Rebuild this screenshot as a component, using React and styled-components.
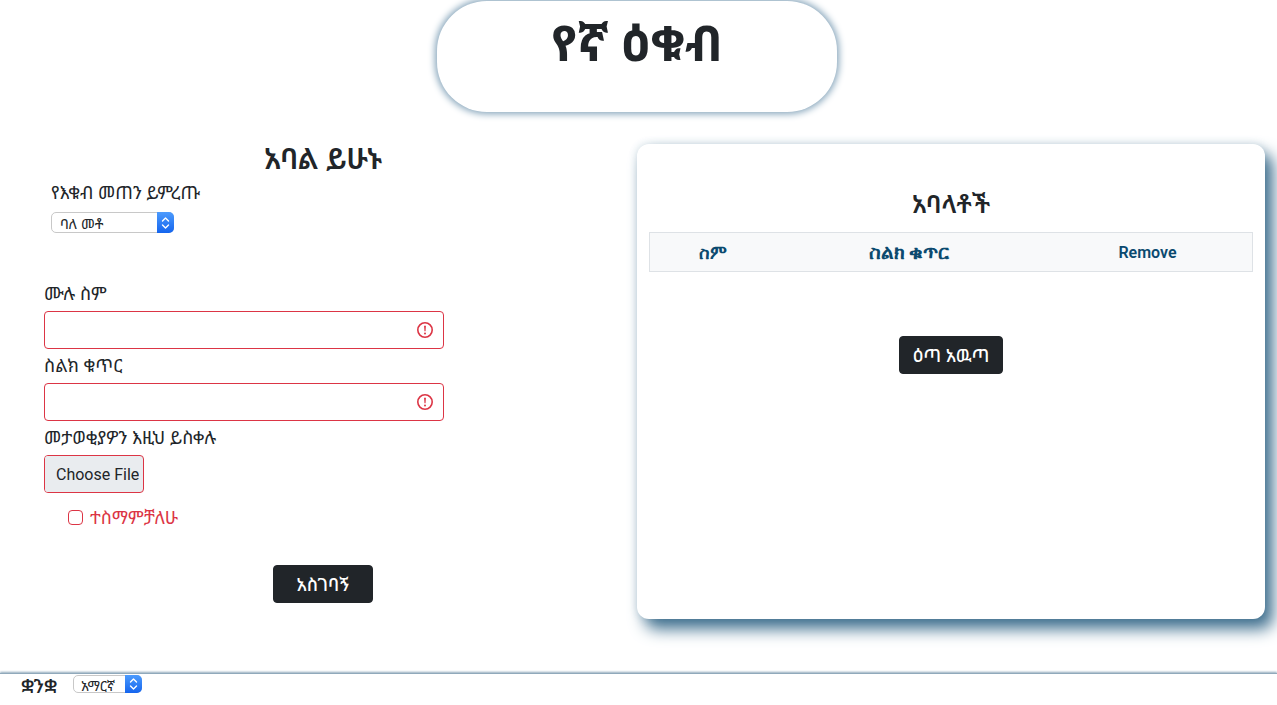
import styled, { createGlobalStyle } from 'styled-components'

const GlobalStyle = createGlobalStyle`
  * { box-sizing: border-box; }
  html, body { margin: 0; padding: 0; background: #fff; }
  body {
    font-family: "Noto Sans", "Noto Sans Ethiopic", "Liberation Sans", sans-serif;
    font-size: 18px;
    line-height: 1.5;
    color: #212529;
  }
`

const Page = styled.div`
  width: 1277px;
  height: 705px;
  overflow: hidden;
  display: flex;
  flex-direction: column;
`

const Banner = styled.header`
  align-self: center;
  width: 400px;
  height: 111px;
  margin: 1px 3px 0 0;
  border-radius: 50px;
  background: #fff;
  box-shadow: 0 0 7px 2px #85a4ba;
  text-align: center;
`

const BannerTitle = styled.h1`
  margin: 11px 0 0;
  font-size: 49.5px;
  line-height: 60px;
  font-weight: 700;
`

const Columns = styled.main`
  display: flex;
  align-items: flex-start;
  margin-top: 32px;
`

const SignUp = styled.section`
  width: 637px;
  padding: 0 0 0 44px;
`

const SignUpTitle = styled.h2`
  width: 558px;
  height: 36px;
  margin: 0;
  text-align: center;
  font-size: 29px;
  line-height: 28px;
  font-weight: 600;
`

const PotPicker = styled.div`
  padding-left: 7px;
  height: 101px;
`

const Label = styled.label`
  display: block;
  font-size: 18px;
  line-height: 24px;
`

const PickerLabel = styled(Label)`
  margin-bottom: 8px;
`

const SelectWrap = styled.div`
  position: relative;
  width: ${({ $w }) => $w}px;
  height: ${({ $h }) => $h}px;
  margin-top: ${({ $top }) => $top || 0}px;
`

const NativeSelect = styled.select`
  appearance: none;
  display: block;
  width: 100%;
  height: 100%;
  padding: 0 0 ${({ $lift }) => $lift}px ${({ $pad }) => $pad}px;
  border: 1px solid #c8c8c8;
  border-radius: 5px;
  background: #fff;
  color: #212529;
  font-family: inherit;
  font-size: ${({ $size }) => $size}px;
`

const SelectStepper = styled.span`
  position: absolute;
  top: 0;
  right: 0;
  bottom: 0;
  width: 17px;
  border-radius: 0 5px 5px 0;
  background: linear-gradient(#4c9bfd, #1565ee);
  display: flex;
  align-items: center;
  justify-content: center;
  pointer-events: none;
`

const Field = styled.div`
  position: relative;
  width: 400px;
  height: 38px;
`

const TextInput = styled.input`
  display: block;
  width: 100%;
  height: 100%;
  padding: 6px 36px 6px 12px;
  border: 1px solid #dc3545;
  border-radius: 4px;
  background: #fff;
  outline: none;
`

const FieldIcon = styled.svg`
  position: absolute;
  top: 11px;
  right: 11px;
  width: 16px;
  height: 16px;
  pointer-events: none;
`

const FieldLabel = styled(Label)`
  margin: ${({ $top }) => $top}px 0 ${({ $bottom }) => $bottom}px;
`

const FileInput = styled.input`
  display: block;
  width: 100px;
  height: 38px;
  padding: 0;
  border: 1px solid #dc3545;
  border-radius: 4px;
  background: #e9ecef;
  overflow: hidden;
  font-family: "Roboto", "Liberation Sans", sans-serif;
  font-size: 16px;
  color: #212529;

  &::file-selector-button {
    height: 36px;
    margin: 0 30px 0 0;
    padding: 0 0 0 11px;
    border: 0;
    background: #e9ecef;
    color: #212529;
    font: inherit;
  }
`

const Consent = styled.div`
  display: flex;
  align-items: center;
  gap: 7px;
  margin: 12px 0 0 24px;
  height: 24px;
  color: #dc3545;
`

const CheckBox = styled.input`
  appearance: none;
  width: 15px;
  height: 15px;
  margin: 0;
  border: 1px solid #dc3545;
  border-radius: 4px;
  background: #fff;
`

const DarkButton = styled.button`
  display: block;
  width: ${({ $w }) => $w}px;
  height: 38px;
  margin: ${({ $top }) => $top}px auto 0;
  padding: 0;
  border: 1px solid #212529;
  border-radius: 4px;
  background: #212529;
  color: #fff;
  font-family: inherit;
  font-size: 18px;
  font-weight: 500;
`

const SubmitRow = styled.div`
  width: 558px;
`

const MembersCard = styled.section`
  width: 628px;
  height: 475px;
  padding: 44px 12px 0;
  border-radius: 12px;
  background: #fff;
  box-shadow: 8px 10px 16px #3f6f8e, 0 0 8px rgba(47, 99, 133, 0.2);
`

const MembersTitle = styled.h3`
  margin: 0 0 14px;
  text-align: center;
  font-size: 25px;
  line-height: 30px;
  font-weight: 600;
`

const Table = styled.table`
  width: 604px;
  border-collapse: separate;
  border-spacing: 0;
  table-layout: fixed;
`

const HeadCell = styled.th`
  width: ${({ $w }) => $w}px;
  height: 40px;
  padding: 1px 0 0;
  border-top: 1px solid #dee2e6;
  border-bottom: 1px solid #dee2e6;
  background: #f8f9fa;
  color: #0b4a6f;
  font-family: "Roboto", "Noto Sans", sans-serif;
  font-size: ${({ $size }) => $size}px;
  font-weight: 600;
  text-align: center;

  &:first-child { border-left: 1px solid #dee2e6; }
  &:last-child { border-right: 1px solid #dee2e6; }
`

const Footer = styled.footer`
  display: flex;
  align-items: flex-start;
  height: 32px;
  margin-top: 54px;
  padding-left: 21px;
  border-top: 1px solid #90a9bb;
  box-shadow: 0 -1px 2px #90a9bb;
`

const FooterLabel = styled.span`
  width: 52px;
  font-size: 20px;
  line-height: 24px;
  font-weight: 500;
`

const Chevrons = () => (
  <svg width="9" height="14" viewBox="0 0 9 14" fill="none" stroke="#fff" strokeWidth="1.4" strokeLinecap="round" strokeLinejoin="round">
    <path d="M1.5 5 4.5 2 7.5 5" />
    <path d="M1.5 9 4.5 12 7.5 9" />
  </svg>
)

const Invalid = () => (
  <FieldIcon viewBox="0 0 12 12" fill="none" stroke="#dc3545">
    <circle cx="6" cy="6" r="5.4" strokeWidth="1.2" />
    <path d="M5.3 2.8h1.4L6.4 7h-.8z" fill="#dc3545" stroke="none" />
    <circle cx="6" cy="8.7" r=".75" fill="#dc3545" stroke="none" />
  </FieldIcon>
)

export default function App() {
  return (
    <Page>
      <GlobalStyle />
      <Banner>
        <BannerTitle>የኛ ዕቁብ</BannerTitle>
      </Banner>

      <Columns>
        <SignUp>
          <SignUpTitle>አባል ይሁኑ</SignUpTitle>
          <PotPicker>
            <PickerLabel>የእቁብ መጠን ይምረጡ</PickerLabel>
            <SelectWrap $w={123} $h={21}>
              <NativeSelect $pad={8} $size={14.5} $lift={2} defaultValue="100">
                <option value="100">ባለ መቶ</option>
              </NativeSelect>
              <SelectStepper><Chevrons /></SelectStepper>
            </SelectWrap>
          </PotPicker>

          <FieldLabel $top={0} $bottom={6}>ሙሉ ስም</FieldLabel>
          <Field>
            <TextInput type="text" />
            <Invalid />
          </Field>
          <FieldLabel $top={4} $bottom={6}>ስልክ ቁጥር</FieldLabel>
          <Field>
            <TextInput type="text" />
            <Invalid />
          </Field>
          <FieldLabel $top={4} $bottom={6}>መታወቂያዎን እዚህ ይስቀሉ</FieldLabel>
          <FileInput type="file" />
          <Consent>
            <CheckBox type="checkbox" id="agree" />
            <label htmlFor="agree">ተስማምቻለሁ</label>
          </Consent>
          <SubmitRow>
            <DarkButton $w={100} $top={36}>አስገባኝ</DarkButton>
          </SubmitRow>
        </SignUp>

        <MembersCard>
          <MembersTitle>አባላቶች</MembersTitle>
          <Table>
            <thead>
              <tr>
                <HeadCell $w={126} $size={18}>ስም</HeadCell>
                <HeadCell $w={268} $size={19.5}>ስልክ ቁጥር</HeadCell>
                <HeadCell $w={210} $size={16}>Remove</HeadCell>
              </tr>
            </thead>
          </Table>
          <DarkButton $w={104} $top={64}>ዕጣ አዉጣ</DarkButton>
        </MembersCard>
      </Columns>

      <Footer>
        <FooterLabel>ቋንቋ</FooterLabel>
        <SelectWrap $w={69} $h={18} $top={1}>
          <NativeSelect $pad={7} $size={14} $lift={0} defaultValue="am">
            <option value="am">አማርኛ</option>
          </NativeSelect>
          <SelectStepper><Chevrons /></SelectStepper>
        </SelectWrap>
      </Footer>
    </Page>
  )
}
